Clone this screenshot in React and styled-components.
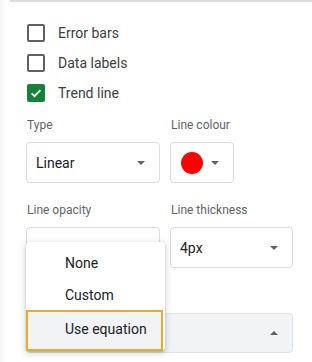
import styled, { createGlobalStyle } from "styled-components";

const GlobalStyle = createGlobalStyle`
  html, body {
    margin: 0;
    padding: 0;
    background: #fff;
  }
  body {
    font-family: Roboto, "Liberation Sans", Arial, sans-serif;
    color: #3c4043;
  }
`;

export default function App() {
  return (
    <>
      <GlobalStyle />
      <Panel>
        <TopBar />
        <Content>
          <CheckList>
            <CheckRow>
              <Box />
              <CheckText>Error bars</CheckText>
            </CheckRow>
            <CheckRow>
              <Box />
              <CheckText>Data labels</CheckText>
            </CheckRow>
            <CheckRow>
              <Box checked>
                <svg width="14" height="14" viewBox="0 0 24 24">
                  <path
                    d="M4.5 12.5l5 5L19.5 7"
                    fill="none"
                    stroke="#fff"
                    strokeWidth="3"
                  />
                </svg>
              </Box>
              <CheckText>Trend line</CheckText>
            </CheckRow>
          </CheckList>

          <FieldRow>
            <Field>
              <Label>Type</Label>
              <Select width={134}>
                <Value>Linear</Value>
                <Caret />
              </Select>
            </Field>
            <Field>
              <Label>Line colour</Label>
              <Select width={64}>
                <Swatch />
                <Caret />
              </Select>
            </Field>
          </FieldRow>

          <FieldRow>
            <Field>
              <Label>Line opacity</Label>
              <Select width={134} />
            </Field>
            <Field>
              <Label>Line thickness</Label>
              <Select width={123}>
                <Value>4px</Value>
                <Caret />
              </Select>
            </Field>
          </FieldRow>

          <WideSelect>
            <Caret up />
          </WideSelect>
        </Content>

        <Menu>
          <MenuItem>None</MenuItem>
          <MenuItem>Custom</MenuItem>
          <MenuItem active>Use equation</MenuItem>
        </Menu>
      </Panel>
    </>
  );
}

const Panel = styled.div`
  position: relative;
  width: 312px;
  height: 362px;
  overflow: hidden;
  background: #fff;
  box-shadow: inset 9px 0 6px -6px rgba(0, 0, 0, 0.05);
`;

const TopBar = styled.div`
  height: 2px;
  margin-left: 10px;
  background: #dadce0;
`;

const Content = styled.div`
  display: flex;
  flex-direction: column;
  padding: 16px 0 0 26px;
`;

const CheckList = styled.div`
  display: flex;
  flex-direction: column;
`;

const CheckRow = styled.div`
  display: flex;
  align-items: center;
  height: 30px;
  gap: 13px;
`;

const Box = styled.div`
  box-sizing: border-box;
  width: 18px;
  height: 18px;
  margin-left: 1px;
  border-radius: 2px;
  border: 2px solid ${(p) => (p.checked ? "#188038" : "#5f6368")};
  background: ${(p) => (p.checked ? "#188038" : "#fff")};
  display: flex;
  align-items: center;
  justify-content: center;
`;

const CheckText = styled.span`
  font-size: 14px;
  color: #3c4043;
`;

const FieldRow = styled.div`
  display: flex;
  gap: 10px;
  margin-top: 9px;
  & + & {
    margin-top: 19px;
  }
`;

const Field = styled.div`
  display: flex;
  flex-direction: column;
  gap: 9px;
`;

const Label = styled.div`
  font-size: 12px;
  line-height: 16px;
  color: #5f6368;
  padding-left: 1px;
`;

const Select = styled.div`
  box-sizing: border-box;
  width: ${(p) => p.width}px;
  height: 41px;
  border: 1px solid #dadce0;
  border-radius: 4px;
  display: flex;
  align-items: center;
  justify-content: space-between;
  padding: 0 14px 0 9px;
`;

const Value = styled.span`
  font-size: 14px;
  color: #202124;
`;

const Caret = styled.span`
  width: 0;
  height: 0;
  border-left: 4px solid transparent;
  border-right: 4px solid transparent;
  ${(p) =>
    p.up
      ? "border-bottom: 4px solid #5f6368;"
      : "border-top: 4px solid #5f6368;"}
`;

const Swatch = styled.span`
  width: 22px;
  height: 22px;
  border-radius: 50%;
  background: #ff0000;
  margin-left: 1px;
`;

const WideSelect = styled.div`
  box-sizing: border-box;
  width: 267px;
  height: 40px;
  margin-top: 45px;
  background: #f1f3f4;
  border: 1px solid #e3e3e3;
  border-radius: 4px;
  display: flex;
  align-items: center;
  justify-content: flex-end;
  padding-right: 14px;
`;

const Menu = styled.div`
  position: absolute;
  left: 26px;
  top: 242px;
  width: 139px;
  padding-top: 5px;
  background: #fff;
  border-radius: 4px;
  box-shadow: 0 2px 6px 2px rgba(60, 64, 67, 0.15),
    0 1px 2px rgba(60, 64, 67, 0.3);
`;

const MenuItem = styled.div`
  box-sizing: border-box;
  height: ${(p) => (p.active ? 41 : 32)}px;
  width: ${(p) => (p.active ? 137 : 139)}px;
  display: flex;
  align-items: center;
  padding-left: ${(p) => (p.active ? 37 : 39)}px;
  padding-bottom: ${(p) => (p.active ? 4 : 0)}px;
  font-size: 14px;
  color: #202124;
  background: ${(p) => (p.active ? "#f1f3f4" : "transparent")};
  border: ${(p) => (p.active ? "2px solid #f0aa2a" : "none")};
  margin-top: ${(p) => (p.active ? -1 : 0)}px;
`;
